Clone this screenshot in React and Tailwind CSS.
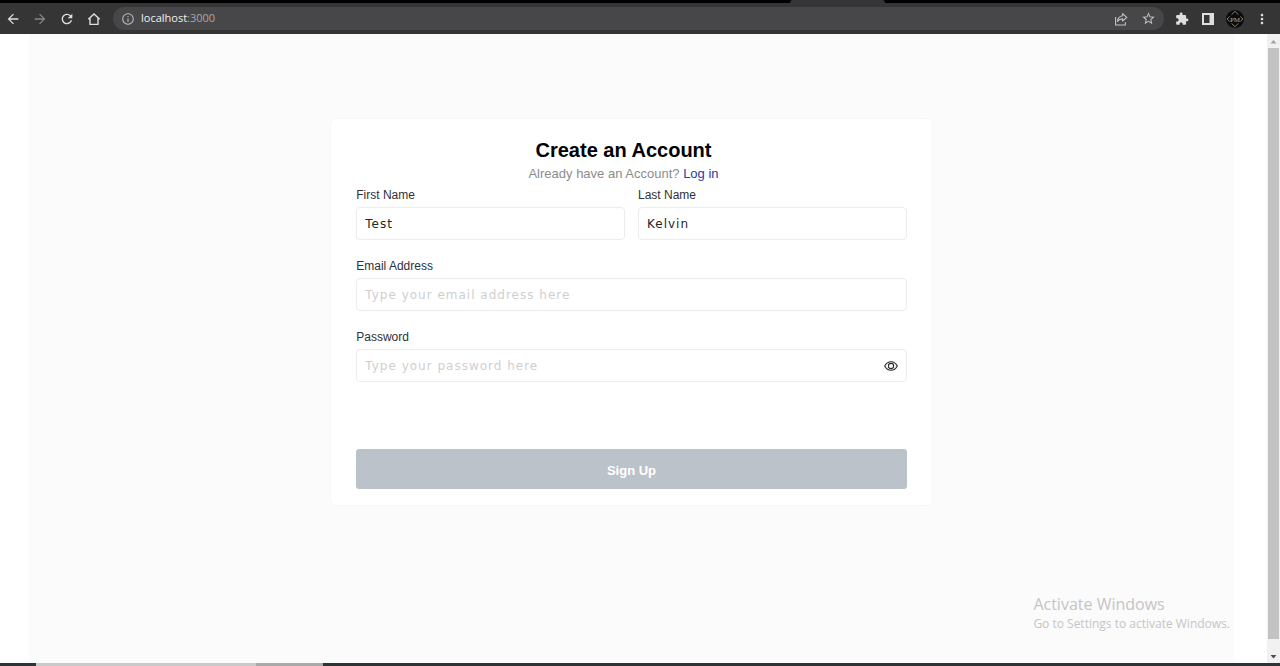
import { useState } from "react";
import { MdArrowBack, MdArrowForward, MdRefresh, MdStarBorder, MdExtension, MdMoreVert, MdInfoOutline } from "react-icons/md";

function HomeIcon() {
  return (
    <svg viewBox="0 0 16 16" className="size-4" fill="none" stroke="currentColor" strokeWidth="1.4" aria-hidden="true">
      <path d="M2.300 8.200 8 2.900l5.700 5.300M4 7v6.400h8V7" />
    </svg>
  );
}

function ShareIcon() {
  return (
    <svg viewBox="0 0 16 16" className="size-4" fill="none" stroke="currentColor" strokeWidth="1.1" strokeLinejoin="round" aria-hidden="true">
      <path d="M2.600 6v8h9.800v-2.800" />
      <path d="M9.600 2.600 13.800 6.300 9.600 10V7.900C7.300 7.900 5.700 8.600 4.500 10.400 4.800 7.200 6.500 5.100 9.600 4.700Z" />
    </svg>
  );
}

function SidePanelIcon() {
  return (
    <svg viewBox="0 0 12 12" className="size-3" aria-hidden="true">
      <path fill="currentColor" fillRule="evenodd" d="M0 0h12v12H0ZM2 2v8h5.500V2Z" />
    </svg>
  );
}

function EyeIcon({ crossed }) {
  return (
    <svg viewBox="0 0 14 12" className="h-3 w-[14px]" fill="none" stroke="#2b2b2b" strokeWidth="1.1" aria-hidden="true">
      <path d="M.7 6C2.100 3.300 4.300 1.700 7 1.700S11.900 3.300 13.300 6C11.900 8.700 9.700 10.300 7 10.300S2.100 8.700.7 6Z" />
      <circle cx="7" cy="6" r="2.600" />
      {crossed && <path d="M2 11 12 1" />}
    </svg>
  );
}

function Avatar() {
  return (
    <svg viewBox="0 0 18 18" className="size-[18px]" aria-hidden="true">
      <circle cx="9" cy="9" r="9" fill="#0c0a0a" />
      <path d="M5.500 4.700 9 1.300l3.500 3.400M5.500 13.300 9 16.700l3.500-3.400M3.700 6.500 1 9l2.700 2.500M14.300 6.500 17 9l-2.700 2.500" fill="none" stroke="#a89a88" strokeWidth=".8" />
      <text x="9" y="11.500" textAnchor="middle" fontSize="7" fill="#c9a184" fontFamily="Liberation Serif, serif">PM</text>
    </svg>
  );
}

function IconButton({ label, className = "", children }) {
  return (
    <button type="button" aria-label={label} className={`flex size-4 items-center justify-center ${className}`}>
      {children}
    </button>
  );
}

function Toolbar() {
  return (
    <header>
      <div className="flex h-[3px] bg-black">
        <div className="ml-[61.7%] w-[95px] rounded-t-sm bg-[#353535]" />
      </div>
      <div className="flex h-[31px] items-center bg-[#353535] pr-[10px] pl-[5px] text-[#dedede]">
        <nav className="flex gap-[11px]">
          <IconButton label="Back"><MdArrowBack className="size-4" /></IconButton>
          <IconButton label="Forward" className="text-[#858585]"><MdArrowForward className="size-4" /></IconButton>
          <IconButton label="Reload"><MdRefresh className="size-4" /></IconButton>
          <IconButton label="Home"><HomeIcon /></IconButton>
        </nav>
        <div className="ml-[11px] flex h-[23px] flex-1 items-center rounded-full bg-[#474749] pr-2 pl-2">
          <MdInfoOutline className="size-[14px] text-[#b5b5b5]" />
          <button type="button" aria-label="Address" className="ml-[6px] flex-1 text-left font-['Open_Sans',sans-serif] text-[11px] text-[#f0f0f0]">
            localhost<span className="text-[#a8a8a8]">:3000</span>
          </button>
          <div className="flex gap-[11px] text-[#c4c4c4]">
            <IconButton label="Share"><ShareIcon /></IconButton>
            <IconButton label="Bookmark"><MdStarBorder className="size-[15px]" /></IconButton>
          </div>
        </div>
        <div className="ml-[10px] flex items-center gap-[10px]">
          <IconButton label="Extensions"><MdExtension className="size-[14px]" /></IconButton>
          <IconButton label="Side panel"><SidePanelIcon /></IconButton>
          <button type="button" aria-label="Profile"><Avatar /></button>
          <IconButton label="Menu"><MdMoreVert className="size-4" /></IconButton>
        </div>
      </div>
    </header>
  );
}

function Field({ id, label, action, ...props }) {
  return (
    <div className="flex min-w-0 flex-1 flex-col gap-px">
      <label htmlFor={id} className="text-xs leading-[22px] text-[#2f3138]">{label}</label>
      <div className="flex h-[33px] items-center rounded-sm border border-[#ececee] bg-white px-2">
        <input
          id={id}
          className="min-w-0 flex-1 bg-transparent font-['DejaVu_Sans',sans-serif] text-xs tracking-[1px] text-[#26262b] outline-none placeholder:text-[#cfcfcf]"
          {...props}
        />
        {action}
      </div>
    </div>
  );
}

function SignUpForm() {
  const [visible, setVisible] = useState(false);
  return (
    <form onSubmit={(e) => e.preventDefault()} className="w-1/2 rounded-md border border-[#f7f7f7] bg-white px-[25px] pt-[17px] pb-4">
      <div className="pr-4 text-center">
        <h1 className="text-xl leading-7 font-bold text-black">Create an Account</h1>
        <p className="text-[13px] leading-5 text-[#8c8c8c]">
          Already have an Account? <a href="#login" className="text-[#2b38a8]">Log in</a>
        </p>
      </div>
      <div className="flex flex-col gap-[15px]">
        <div className="flex gap-[13px]">
          <Field id="first" label="First Name" type="text" defaultValue="Test" />
          <Field id="last" label="Last Name" type="text" defaultValue="Kelvin" />
        </div>
        <Field id="email" label="Email Address" type="email" placeholder="Type your email address here" />
        <Field
          id="password"
          label="Password"
          type={visible ? "text" : "password"}
          placeholder="Type your password here"
          action={
            <button type="button" aria-label="Show password" onClick={() => setVisible(!visible)}>
              <EyeIcon crossed={visible} />
            </button>
          }
        />
      </div>
      <button type="submit" className="mt-[67px] h-10 w-full rounded-[3px] bg-[#bcc2ca] pt-1 text-[13px] font-bold text-white">
        Sign Up
      </button>
    </form>
  );
}

function Scrollbar() {
  return (
    <div className="flex w-[13px] flex-col items-center bg-[#f1f1f2]" aria-hidden="true">
      <svg viewBox="0 0 13 14" className="h-[14px] w-[13px]"><path d="M3.500 9.500 6.500 6l3 3.500Z" fill="#a3a3a3" /></svg>
      <div className="w-[11px] flex-1 bg-[#c3c3c4]" />
      <svg viewBox="0 0 13 24" className="h-6 w-[13px]"><path d="M3.500 16h6l-3 3.500Z" fill="#4c4c4c" /></svg>
    </div>
  );
}

export default function App() {
  return (
    <div className="flex min-h-screen flex-col bg-white font-['Liberation_Sans',Arial,sans-serif]">
      <Toolbar />
      <div className="flex flex-1">
        <main className="mr-[33px] ml-[29px] flex flex-1 flex-col items-center bg-[#fbfbfb] pt-[84px]">
          <SignUpForm />
          <aside className="mt-auto mr-1 mb-[30px] self-end pt-4 font-['Open_Sans',sans-serif] text-[#c5c5c5]">
            <p className="text-base leading-[22px]">Activate Windows</p>
            <p className="text-xs leading-[18px]">Go to Settings to activate Windows.</p>
          </aside>
        </main>
        <Scrollbar />
      </div>
      <footer className="flex h-[3px] bg-[#2c3437] pl-9">
        <div className="w-[220px] bg-[#cacaca]" />
        <div className="w-[67px] bg-[#a9a9a9]" />
      </footer>
    </div>
  );
}
